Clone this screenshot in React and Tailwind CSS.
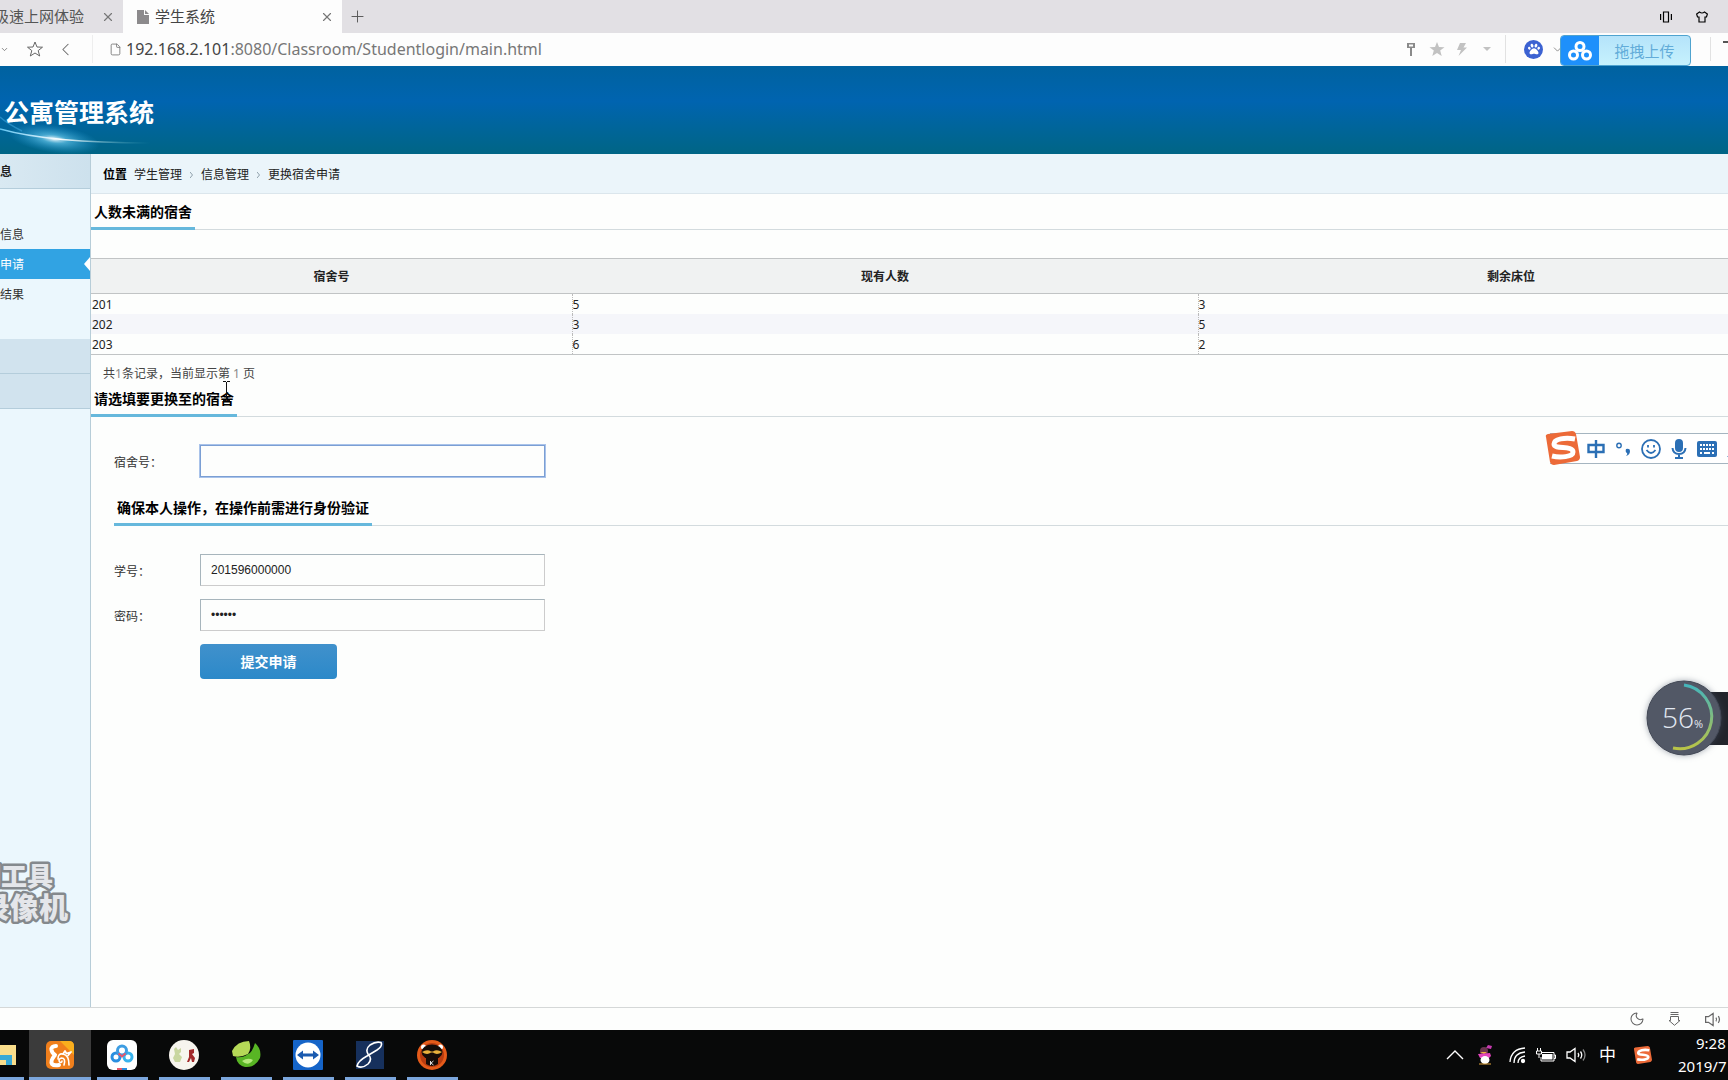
import { useState } from 'react';
import { ChevronDown, ChevronLeft, File, Moon, Plus, Star, X } from 'lucide-react';
import { FaPaw } from 'react-icons/fa';

const ROOMS = [
  { id: '201', used: 5, free: 3 },
  { id: '202', used: 3, free: 5 },
  { id: '203', used: 6, free: 2 },
];

const MENU = [
  { label: '信息', active: false },
  { label: '申请', active: true },
  { label: '结果', active: false },
];

const CRUMBS = ['学生管理', '信息管理', '更换宿舍申请'];

function SogouLogo({ className }) {
  return (
    <svg className={className} viewBox="0 0 36 34">
      <path d="M1 6 Q0 4 3 3 L27 0 Q30 0 31 3 L35 26 Q35 29 32 30 L9 34 Q6 34 5 31 Z" fill="#ec6a38" />
      <path d="M30 8 C20 6 9 8 9 13 C9 19 28 14 28 21 C28 26 15 27 7 25" fill="none" stroke="#fff" strokeWidth="5" />
    </svg>
  );
}

function SpeakerIcon({ className, arcs = 2 }) {
  return (
    <svg className={className} viewBox="0 0 22 16" fill="none" stroke="currentColor" strokeWidth="1.3">
      <path d="M1 5 H4 L9 1.5 V14.5 L4 11 H1 Z" />
      <path d="M12 6 Q13.500 8 12 10" />
      <path d="M14.500 4.500 Q17 8 14.500 11.500" />
      {arcs > 2 && <path d="M17 2.500 Q21 8 17 13.500" opacity="0.5" />}
    </svg>
  );
}

function TabBar() {
  return (
    <div className="flex h-[33px] shrink-0 items-stretch bg-[#e2e0e4] text-[15px] text-[#444]">
      <div className="flex w-[123px] items-center justify-between overflow-hidden pr-2">
        <span className="-ml-1.5 whitespace-nowrap text-[#555]">极速上网体验</span>
        <button type="button" aria-label="关闭"><X size={14} strokeWidth={2} color="#777" /></button>
      </div>
      <div className="flex w-[219px] items-center bg-[#fdfdfd] pl-3.5 pr-2">
        <svg className="mr-1.5 h-3.5 w-3" viewBox="0 0 12 14"><path d="M0 0 H7 V5 H12 V14 H0 Z M8 0 L12 4 H8 Z" fill="#8c8a8c" /></svg>
        <span className="flex-1">学生系统</span>
        <button type="button" aria-label="关闭"><X size={14} strokeWidth={2} color="#777" /></button>
      </div>
      <button type="button" aria-label="新标签" className="ml-1.5"><Plus size={19} strokeWidth={1.2} color="#555" /></button>
      <div className="ml-auto flex items-center gap-6 pr-5 text-black">
        <svg className="h-3 w-3" viewBox="0 0 12 12" fill="none" stroke="currentColor" strokeWidth="1.2">
          <path d="M3.500 1 H8.500 V11 H3.500 Z M0.600 3 V9 M11.400 3 V9" />
        </svg>
        <svg className="h-3 w-3" viewBox="0 0 12 12" fill="none" stroke="currentColor" strokeWidth="1.2">
          <path d="M3.500 1 Q6 3 8.500 1 L11.400 3 L10.500 6 H9 V11 H3 V6 H1.500 L0.600 3 Z" />
        </svg>
      </div>
    </div>
  );
}

function AddressBar() {
  return (
    <div className="relative flex h-[33px] shrink-0 items-center bg-[#fdfdfd] pb-px">
      <ChevronDown size={9} color="#666" />
      <svg className="ml-[18px] h-4 w-4" viewBox="0 0 16 16" fill="none" stroke="#666">
        <path d="M8 1 L10 6 L15.500 6.200 L11.200 9.600 L12.700 15 L8 12 L3.300 15 L4.800 9.600 L0.500 6.200 L6 6 Z" />
      </svg>
      <ChevronLeft size={21} strokeWidth={1.2} color="#666" className="ml-3" />
      <span className="ml-4 h-7 w-px bg-[#eee]" />
      <File size={13} strokeWidth={1.6} color="#777" className="ml-4" />
      <span className="ml-1 flex-1 text-[16px] leading-5 text-[#777]">
        <span className="text-[#444]">192.168.2.101</span>:8080/Classroom/Studentlogin/main.html
      </span>
      <div className="flex items-center pr-[164px]">
        <svg className="mr-[13px] h-[13px] w-2.5" viewBox="0 0 10 13" fill="#8a8a8a">
          <path d="M1 0 H9 V5 H6 V13 H4 V5 H1 Z M3 1.500 V3.500 H7 V1.500 Z" fillRule="evenodd" />
        </svg>
        <svg className="mr-3 h-4 w-4" viewBox="0 0 16 16" fill="#c2c2c2">
          <path d="M8 1 L10 6 L15.500 6.200 L11.200 9.600 L12.700 15 L8 12 L3.300 15 L4.800 9.600 L0.500 6.200 L6 6 Z" />
        </svg>
        <svg className="mr-4 h-[13px] w-2.5" viewBox="0 0 10 13" fill="#c2c2c2"><path d="M3 0 H9 L6.500 4.500 H10 L1.500 13 L4 7 H0 Z" /></svg>
        <svg className="h-1 w-2" viewBox="0 0 8 4" fill="#c2c2c2"><path d="M0 0 H8 L4 4 Z" /></svg>
        <span className="ml-3.5 h-7 w-px bg-[#e2e2e2]" />
        <span className="ml-[18px] flex h-[19px] w-[19px] items-center justify-center rounded-full bg-[#3c62d2]">
          <FaPaw size={12} color="#fff" />
        </span>
        <ChevronDown size={13} strokeWidth={1.5} color="#777" className="ml-2" />
      </div>
      <span className="absolute right-[17px] h-6 w-px bg-[#e2e2e2]" />
      <span className="absolute right-0 top-2 h-0.5 w-[5px] bg-[#555]" />
      <button
        type="button"
        className="absolute right-[37px] top-0.5 z-10 flex h-[31px] w-[131px] overflow-hidden rounded border border-[#4fa3cf] bg-gradient-to-b from-[#b5e3fa] to-[#c6f2fd]"
      >
        <span className="flex h-full w-[38px] items-center justify-center bg-[#1e90fb]">
          <svg className="h-5 w-6" viewBox="0 0 24 20" fill="none" stroke="#fff" strokeWidth="3">
            <circle cx="12" cy="5.500" r="4" /><circle cx="5.500" cy="14" r="4" /><circle cx="18.500" cy="14" r="4" />
          </svg>
        </span>
        <span className="flex-1 text-center text-[15px] leading-[30px] text-[#62acd9]">拖拽上传</span>
      </button>
    </div>
  );
}

function Banner() {
  return (
    <header className="relative flex h-[88px] shrink-0 items-center bg-gradient-to-b from-[#00629f] via-[#0064b0] via-40% to-[#006585] pl-1 pt-1">
      <svg className="absolute bottom-0 left-0 h-[50px] w-40" viewBox="0 0 160 50">
        <defs>
          <radialGradient id="glow">
            <stop offset="0" stopColor="#fff" stopOpacity="0.95" />
            <stop offset="0.3" stopColor="#6fd0f5" stopOpacity="0.6" />
            <stop offset="1" stopColor="#2aa0dd" stopOpacity="0" />
          </radialGradient>
          <linearGradient id="tail">
            <stop offset="0" stopColor="#5fc3f0" />
            <stop offset="0.4" stopColor="#fff" />
            <stop offset="1" stopColor="#4ab" stopOpacity="0" />
          </linearGradient>
        </defs>
        <ellipse cx="54" cy="35" rx="46" ry="14" fill="url(#glow)" transform="rotate(8 54 35)" />
        <path d="M0 25 Q50 39 150 39" fill="none" stroke="url(#tail)" strokeWidth="1.5" />
        <path d="M0 13 Q8 20 22 27" fill="none" stroke="#3aa5dc" strokeWidth="1.500" opacity="0.6" />
      </svg>
      <h1 className="relative text-[25px] font-bold leading-8 text-white">公寓管理系统</h1>
    </header>
  );
}

function Sidebar() {
  return (
    <aside className="relative flex w-[91px] shrink-0 flex-col border-r border-[#b7cdd8] bg-[#ebf7fd]">
      <h2 className="h-[35px] border-b border-[#b4cddb] bg-gradient-to-r from-[#d9e9f2] to-[#cde1ed] text-xs font-bold leading-[36px]">息</h2>
      <ul className="py-[30px] text-xs">
        {MENU.map(m => (
          <li key={m.label}>
            <a href="#" className={`relative block h-[30px] leading-8 ${m.active ? 'bg-[#31a3e3] text-white' : 'text-[#333]'}`}>
              {m.label}
              {m.active && (
                <svg className="absolute right-0 top-2 h-3.5 w-1.5" viewBox="0 0 6 14"><path d="M6 0 V14 L0 7 Z" fill="#fff" /></svg>
              )}
            </a>
          </li>
        ))}
      </ul>
      <div className="h-[35px] border-b border-[#b4cddb] bg-[#d1e3ee]" />
      <div className="h-[35px] border-b border-[#b4cddb] bg-[#d1e3ee]" />
      <div className="absolute bottom-[82px] left-0 w-full overflow-hidden font-black">
        <svg className="block h-[68px] w-full" viewBox="0 0 90 68" fill="#e4e6ea" stroke="#84898d" strokeWidth="5" strokeLinejoin="round" paintOrder="stroke">
          <text x="-25" y="29" fontSize="26">间工具</text>
          <text x="-19" y="62" fontSize="29">录像机</text>
        </svg>
      </div>
    </aside>
  );
}

function SectionTitle({ children }) {
  return (
    <div className="flex h-9 border-b border-[#d3dbde]">
      <h3 className="h-9 border-b-[3px] border-[#66b8dc] px-[3px] text-sm font-bold leading-9 text-black">{children}</h3>
    </div>
  );
}

function RoomTable() {
  return (
    <div className="mt-7 -mr-24">
      <table className="w-full table-fixed border-collapse text-xs">
        <thead>
          <tr className="h-[35px] border-y border-[#c1c4c5] bg-[#f0f2f2]">
            <th className="w-[481px] pt-0.5 font-bold">宿舍号</th>
            <th className="pt-0.5 font-bold">现有人数</th>
            <th className="pt-0.5 font-bold">剩余床位</th>
          </tr>
        </thead>
        <tbody className="border-b border-[#c1c4c5]">
          {ROOMS.map(r => (
            <tr key={r.id} className="h-5 leading-[18px] even:bg-[#f5f6fa]">
              <td className="pl-px pt-0.5">{r.id}</td>
              <td className="border-l border-dotted border-[#bbb] pt-0.5">{r.used}</td>
              <td className="border-l border-dotted border-[#bbb] pt-0.5">{r.free}</td>
            </tr>
          ))}
        </tbody>
      </table>
    </div>
  );
}

function Field({ id, label, ...props }) {
  return (
    <div className="flex items-center">
      <label htmlFor={id} className="w-[86px] pt-1 text-xs text-[#333]">{label}</label>
      <input
        id={id}
        className="h-8 w-[345px] border border-[#ccc] border-t-[#a7b5bc] border-l-[#a7b5bc] bg-[#fdfefd] px-2.5 font-['Liberation_Sans',sans-serif] text-xs outline-none focus:border-[#7b9fd4] focus:ring-1 focus:ring-[#a9c3ea]"
        {...props}
      />
    </div>
  );
}

function TransferForm() {
  const [room, setRoom] = useState('');
  const [studentNo, setStudentNo] = useState('201596000000');
  const [password, setPassword] = useState('123456');

  return (
    <form className="flex flex-col gap-[13px] pl-[23px] pt-7" onSubmit={e => e.preventDefault()}>
      <Field id="room" label="宿舍号：" value={room} onChange={e => setRoom(e.target.value)} autoFocus />
      <div className="mb-[15px]">
        <SectionTitle>确保本人操作，在操作前需进行身份验证</SectionTitle>
      </div>
      <Field id="sno" label="学号：" value={studentNo} onChange={e => setStudentNo(e.target.value)} />
      <Field id="pwd" label="密码：" type="password" value={password} onChange={e => setPassword(e.target.value)} />
      <button type="submit" className="ml-[86px] h-[35px] w-[137px] rounded-sm bg-gradient-to-b from-[#4091cc] to-[#2b89c9] text-sm font-bold text-white">
        提交申请
      </button>
    </form>
  );
}

function TaskCell({ active, children }) {
  return (
    <button type="button" className={`relative flex h-full w-[62px] items-center justify-center ${active ? 'bg-[#3b3b3b]' : ''}`}>
      {children}
      <span className={`absolute bottom-0 h-[3px] bg-[#7ba6dc] ${active ? 'w-full' : 'w-[51px]'}`} />
    </button>
  );
}

function Taskbar() {
  return (
    <footer className="flex h-[50px] shrink-0 items-center justify-between overflow-hidden bg-[#080909] text-white">
      <nav className="-ml-[33px] flex h-full">
        <TaskCell>
          <svg className="ml-2 h-6 w-8" viewBox="0 0 32 24">
            <path d="M0 2 H30 V22 H0 Z" fill="#f9dd8b" />
            <path d="M4 12 H26 V22 H20 V17 H9 V22 H4 Z" fill="#38a9d6" />
          </svg>
        </TaskCell>
        <TaskCell active>
          <svg className="h-7 w-7" viewBox="0 0 28 28">
            <rect width="28" height="28" rx="5" fill="#f07f1c" />
            <path d="M14 0 H23 Q28 0 28 5 V14 Z" fill="#f9ae1d" />
            <g fill="none" stroke="#fff" strokeLinecap="round" strokeLinejoin="round">
              <path d="M10 5 Q5 5 5.500 9 Q6 12 9 14 Q4 20 6 23 Q8 25 13 24" strokeWidth="4" />
              <path d="M12 18 Q12 12 17 13 Q23 14 23 24 M18 24 Q20 17 15.500 17 Q12 18 13.500 21 Q16 22 16 20" strokeWidth="1.600" />
              <path d="M17 13 L19 10 L20.500 12.500 L25 11 L22 14.500" strokeWidth="1.800" />
            </g>
          </svg>
        </TaskCell>
        <TaskCell>
          <svg className="h-[30px] w-[30px]" viewBox="0 0 30 30">
            <rect width="30" height="30" rx="6" fill="#fff" />
            <g fill="none" strokeWidth="3">
              <circle cx="9" cy="17" r="4" stroke="#2a8fe0" />
              <circle cx="21" cy="17" r="4" stroke="#38b3ee" />
              <circle cx="15" cy="10.500" r="4.500" stroke="#3e9de2" />
              <path d="M11.500 13.500 L15 16.500 L18.500 13.500" stroke="#e8566a" strokeWidth="2" />
            </g>
            <path d="M10 28 H15 V30 H10 Z" fill="#e8566a" />
            <path d="M15 28 H20 V30 H15 Z" fill="#2a8fe0" />
          </svg>
        </TaskCell>
        <TaskCell>
          <svg className="h-[30px] w-[30px]" viewBox="0 0 30 30">
            <circle cx="15" cy="15" r="15" fill="#f7f5ee" />
            <path d="M5 9 L7 7 L9 10 L12 8 L12 12 L10 14 L13 17 L11 22 H6 L4 18 L6 14 Z" fill="#c9d6a0" />
            <path d="M20 10 L25 9 V13 L23 14 L26 18 L25 22 H23 L22 18 L20 22 H18 L20 17 Z" fill="#a3292a" />
          </svg>
        </TaskCell>
        <TaskCell>
          <svg className="h-[30px] w-[30px]" viewBox="0 0 30 30">
            <path d="M1 11 Q6 1 18 1 Q21 8 17 14 Q9 18 2 16 Z" fill="#b5d957" />
            <path d="M24 3 Q31 9 29 18 Q24 28 14 27 Q6 25 5 17 Q12 18 17 14 Q21 13 24 3 Z" fill="#58b524" />
            <path d="M11 21 Q17 17 22 20 Q17 27 11 21 Z" fill="#b5ea7c" />
          </svg>
        </TaskCell>
        <TaskCell>
          <svg className="h-[30px] w-[30px]" viewBox="0 0 30 30">
            <rect width="30" height="30" rx="1" fill="#1564c8" />
            <circle cx="15" cy="15" r="12.500" fill="#fff" />
            <path d="M4 15 L10 10.500 V13.500 H20 V10.500 L26 15 L20 19.500 V16.500 H10 V19.500 Z" fill="#1b5bb0" />
          </svg>
        </TaskCell>
        <TaskCell>
          <svg className="h-7 w-7" viewBox="0 0 28 28">
            <rect width="28" height="28" fill="#16305c" />
            <path d="M12 13 Q9 8 14 4 Q20 0 25 1.500 Q27 5 21 9 Q16 12 11 15 Q2 20 1 25 Q6 28 12 23 Q17 18 12 13" fill="none" stroke="#fff" strokeWidth="1.600" />
          </svg>
        </TaskCell>
        <TaskCell>
          <svg className="h-[30px] w-[30px]" viewBox="0 0 30 30">
            <circle cx="15" cy="15" r="15" fill="#e55b1a" />
            <circle cx="15" cy="15" r="12" fill="#b83c10" />
            <circle cx="6.500" cy="7" r="2.500" fill="#fff" /><circle cx="23.500" cy="7" r="2.500" fill="#fff" />
            <ellipse cx="15" cy="12" rx="10.500" ry="7.500" fill="#160c08" />
            <path d="M9 18 H21 V24 Q15 28 9 24 Z" fill="#160c08" />
            <path d="M5 12 Q10 9 14 11.500 H16 Q20 9 25 12 Q20 15.500 16 12.500 H14 Q10 15.500 5 12 Z" fill="#e9b13c" />
            <path d="M13.500 21 V25 M16.500 21 L14 23 L16.500 25" fill="none" stroke="#ddd" />
          </svg>
        </TaskCell>
      </nav>

      <div className="flex items-center">
        <svg className="h-2.5 w-[18px]" viewBox="0 0 18 10" fill="none" stroke="#fff" strokeWidth="1.400"><path d="M1 9 L9 1 L17 9" /></svg>
        <svg className="ml-[13px] h-5 w-4" viewBox="0 0 16 20">
          <path d="M9 3 L11 0 L15 1 L14 4 Z" fill="#c63ab0" />
          <circle cx="7" cy="6" r="4" fill="#6b3550" />
          <path d="M3 7 H10 L7 9 Z" fill="#f0b23d" />
          <path d="M1 9 L13 8 L14 11 L12 13 H3 Z" fill="#e445bd" />
          <ellipse cx="8" cy="15" rx="4.500" ry="4" fill="#fff" />
          <path d="M2 19 H14" stroke="#e2a63d" />
        </svg>
        <svg className="ml-4 h-[17px] w-[17px]" viewBox="0 0 17 17" fill="none" stroke="#fff" strokeWidth="1.3">
          <path d="M1 15 Q2 2 16 1 M5 16 Q5 6 16 5 M9 16 Q9 10 16 9" /><circle cx="14" cy="14" r="1.500" fill="#fff" />
        </svg>
        <svg className="ml-2.5 h-[15px] w-5" viewBox="0 0 20 15" fill="none" stroke="#fff">
          <path d="M5.500 4.500 H18 V13 H5 V9 M18 7 H19.500 V10.500 H18" /><rect x="6" y="6" width="10.500" height="5.500" fill="#fff" stroke="none" />
          <path d="M1.500 0 V3 M4.500 0 V3 M0.500 3 H5.500 V6 H0.500 Z M3 6 V10" />
        </svg>
        <SpeakerIcon arcs={3} className="ml-2.5 h-4 w-[22px]" />
        <span className="ml-[11px] text-[17px] leading-5">中</span>
        <SogouLogo className="ml-[17px] h-[18px] w-5" />
        <time className="ml-[25px] w-[50px] whitespace-nowrap text-[15px] leading-[23px]">
          <span className="block pl-[18px]">9:28</span>
          <span className="block">2019/7</span>
        </time>
      </div>
    </footer>
  );
}

function ImeBar() {
  return (
    <div className="absolute right-0 top-[279px] flex h-[31px] w-[178px] items-center gap-2.5 overflow-hidden border-y border-[#a5b5c0] bg-white pl-[37px] text-[#2b6fb5]">
      <svg className="h-[18px] w-[18px] shrink-0" viewBox="0 0 18 18" fill="none" stroke="currentColor" strokeWidth="2.400">
        <path d="M1.500 5 H16.500 V12 H1.500 Z M9 0 V18" />
      </svg>
      <svg className="h-4 w-4 shrink-0" viewBox="0 0 16 16">
        <circle cx="4" cy="4.500" r="2.200" fill="none" stroke="currentColor" strokeWidth="1.400" />
        <path d="M11 8 Q15 7 15 10 Q15 14 11 15 Q13 13 12 12 Q10 11 11 8 Z" fill="currentColor" />
      </svg>
      <svg className="h-5 w-5 shrink-0" viewBox="0 0 20 20" fill="none" stroke="currentColor" strokeWidth="1.800">
        <circle cx="10" cy="10" r="9" /><path d="M5.500 11 Q10 17 14.500 11 M7 6 V8.500 M13 6 V8.500" />
      </svg>
      <svg className="h-5 w-4 shrink-0" viewBox="0 0 16 20" fill="none" stroke="currentColor" strokeWidth="2">
        <rect x="5" y="1" width="6" height="11" rx="3" fill="currentColor" /><path d="M1.500 9 Q2 15 8 15 Q14 15 14.500 9 M8 15 V19 M4 19 H12" />
      </svg>
      <svg className="h-4 w-5 shrink-0" viewBox="0 0 20 16">
        <rect width="20" height="16" rx="2" fill="currentColor" />
        <path d="M3 4 H17 M3 8 H17" stroke="#fff" strokeWidth="2" strokeDasharray="2 1" /><path d="M3 12 H5 M7 12 H13 M15 12 H17" stroke="#fff" strokeWidth="2" />
      </svg>
      <svg className="h-4 w-3 shrink-0" viewBox="0 0 12 16"><path d="M4 4 L12 0 V16 H0 L4 12 L2 9 Z" fill="currentColor" /></svg>
    </div>
  );
}

function SpeedBall() {
  return (
    <div className="absolute right-0 top-[526px] h-[76px] w-[82px]">
      <div className="absolute right-0 top-3 h-[53px] w-6 bg-[#22252c]" />
      <svg className="absolute left-0 top-0 h-[76px] w-[76px] drop-shadow-[0_0_3px_rgba(70,80,100,0.5)]" viewBox="0 0 76 76">
        <defs>
          <linearGradient id="arc" x1="0" y1="0" x2="0" y2="1">
            <stop offset="0" stopColor="#45b5bb" /><stop offset="1" stopColor="#b9c447" />
          </linearGradient>
        </defs>
        <circle cx="38" cy="38" r="37" fill="#525866" stroke="#434956" strokeWidth="1" />
        <path d="M38 5 A32 32 0 1 1 27 68" fill="none" stroke="url(#arc)" strokeWidth="3" />
      </svg>
      <div className="absolute left-4 top-[19px] flex items-baseline font-['Open_Sans','Noto_Sans',sans-serif] text-[#e3e9f2]">
        <span className="text-[28px] font-light leading-9">56</span><span className="text-[11px]">%</span>
      </div>
    </div>
  );
}

export default function App() {
  return (
    <div className="flex h-screen flex-col overflow-hidden bg-[#fdfefd] font-['Noto_Sans','Noto_Sans_CJK_SC',sans-serif] text-[#222]">
      <TabBar />
      <AddressBar />
      <Banner />

      <div className="relative flex min-h-0 flex-1 overflow-hidden">
        <Sidebar />
        <main className="min-w-0 flex-1">
          <nav className="flex h-10 items-center border-b border-[#dbe6ec] bg-[#ebf5fa] pl-3 pt-0.5 text-xs">
            <span className="mr-[7px] font-bold text-black">位置</span>
            {CRUMBS.map((c, i) => (
              <span key={c} className="flex items-center">
                {i > 0 && (
                  <svg className="mx-2 h-1.5 w-[3px]" viewBox="0 0 3 6" fill="none" stroke="#8fa0aa"><path d="M0 0 L2.500 3 L0 6" /></svg>
                )}
                <a href="#">{c}</a>
              </span>
            ))}
          </nav>
          <SectionTitle>人数未满的宿舍</SectionTitle>
          <RoomTable />
          <p className="pl-3 pt-[11px] text-xs leading-[15px] text-[#444]">
            共<span className="text-[#888]">1</span>条记录，当前显示第 <span className="text-[#888]">1</span> 页
          </p>
          <SectionTitle>请选填要更换至的宿舍</SectionTitle>
          <TransferForm />
        </main>

        <ImeBar />
        <SogouLogo className="absolute right-[147px] top-[277px] h-[34px] w-9" />
        <SpeedBall />
        <svg className="absolute left-[222px] top-[227px] h-5 w-[9px]" viewBox="0 0 9 20" fill="none" stroke="#111">
          <path d="M1 0.500 H4 M5 0.500 H8 M4.500 1 V19 M1 19.500 H4 M5 19.500 H8" />
        </svg>
      </div>

      <div className="flex h-[23px] shrink-0 items-center justify-end gap-[23px] border-t border-[#d5d8d8] bg-[#fdfefd] pr-0.5 text-[#666]">
        <Moon size={16} strokeWidth={1.6} />
        <svg className="h-3.5 w-[13px]" viewBox="0 0 13 14" fill="none" stroke="currentColor">
          <path d="M2.500 0.500 H10.500 M2.500 2.500 H10.500 M2.500 4.500 H10.500 V8.500 H12 L6.500 13.300 L1 8.500 H2.500 Z" />
        </svg>
        <SpeakerIcon className="h-[15px] w-[22px]" />
      </div>
      <Taskbar />
    </div>
  );
}
